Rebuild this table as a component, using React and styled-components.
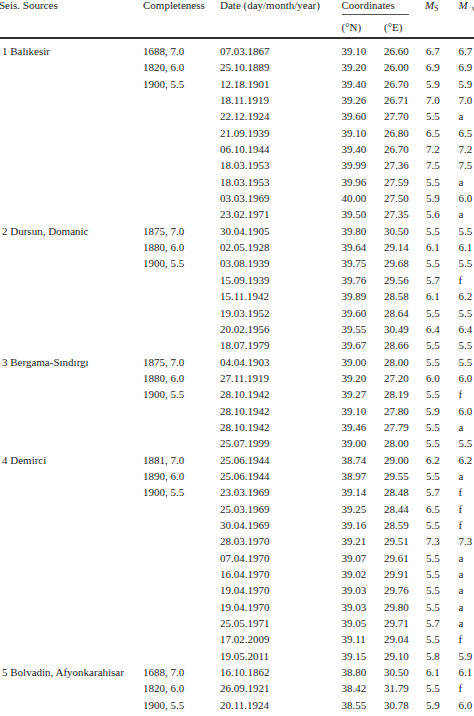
import React from "react";
import styled, { createGlobalStyle } from "styled-components";

const Global = createGlobalStyle`
  html, body { margin: 0; padding: 0; background: #fff; overflow: hidden; }
  body { font-family: "Liberation Serif", "Times New Roman", serif; color: #1e1e1e; }
`;

const COLS = "141px 77px 121.5px 42.5px 42px 32.5px 1fr";

const Table = styled.div`
  width: 474px;
  height: 716px;
  overflow: hidden;
  font-size: 11px;
`;

const HeadTop = styled.div`
  display: grid;
  grid-template-columns: ${COLS};
  padding-left: 2px;
  height: 16px;
  line-height: 10px;
  white-space: nowrap;
`;

const HeadSub = styled.div`
  display: grid;
  grid-template-columns: ${COLS};
  padding-left: 2px;
  height: 23px;
  box-sizing: border-box;
  padding-top: 5px;
  line-height: 12px;
  white-space: nowrap;
  border-bottom: 2px solid #2e2e2e;
`;

const HeadCell = styled.div`
  margin-left: ${(p) => p.$shift || 0}px;
`;

const CoordHead = styled.div`
  grid-column: 4 / span 2;
  width: 67px;
  height: 15px;
  box-sizing: border-box;
  border-bottom: 1px solid #555;
`;

const Mag = styled.span`
  font-style: italic;
`;

const Sub = styled.sub`
  font-size: 7.5px;
  font-style: normal;
  vertical-align: -2px;
  line-height: 0;
  margin-left: ${(p) => p.$gap || 0}px;
`;

const Body = styled.div`
  padding-top: 4px;
`;

const Row = styled.div`
  display: grid;
  grid-template-columns: ${COLS};
  padding-left: 2px;
  height: 16.35px;
  line-height: 16.35px;
  white-space: nowrap;
`;

const Cell = styled.div``;

const groups = [
  {
    name: "1 Balıkesir",
    comp: ["1688, 7.0", "1820, 6.0", "1900, 5.5"],
    rows: [
      ["07.03.1867", "39.10", "26.60", "6.7", "6.7"],
      ["25.10.1889", "39.20", "26.00", "6.9", "6.9"],
      ["12.18.1901", "39.40", "26.70", "5.9", "5.9"],
      ["18.11.1919", "39.26", "26.71", "7.0", "7.0"],
      ["22.12.1924", "39.60", "27.70", "5.5", "a"],
      ["21.09.1939", "39.10", "26.80", "6.5", "6.5"],
      ["06.10.1944", "39.40", "26.70", "7.2", "7.2"],
      ["18.03.1953", "39.99", "27.36", "7.5", "7.5"],
      ["18.03.1953", "39.96", "27.59", "5.5", "a"],
      ["03.03.1969", "40.00", "27.50", "5.9", "6.0"],
      ["23.02.1971", "39.50", "27.35", "5.6", "a"],
    ],
  },
  {
    name: "2 Dursun, Domanic",
    comp: ["1875, 7.0", "1880, 6.0", "1900, 5.5"],
    rows: [
      ["30.04.1905", "39.80", "30.50", "5.5", "5.5"],
      ["02.05.1928", "39.64", "29.14", "6.1", "6.1"],
      ["03.08.1939", "39.75", "29.68", "5.5", "5.5"],
      ["15.09.1939", "39.76", "29.56", "5.7", "f"],
      ["15.11.1942", "39.89", "28.58", "6.1", "6.2"],
      ["19.03.1952", "39.60", "28.64", "5.5", "5.5"],
      ["20.02.1956", "39.55", "30.49", "6.4", "6.4"],
      ["18.07.1979", "39.67", "28.66", "5.5", "5.5"],
    ],
  },
  {
    name: "3 Bergama-Sındırgı",
    comp: ["1875, 7.0", "1880, 6.0", "1900, 5.5"],
    rows: [
      ["04.04.1903", "39.00", "28.00", "5.5", "5.5"],
      ["27.11.1919", "39.20", "27.20", "6.0", "6.0"],
      ["28.10.1942", "39.27", "28.19", "5.5", "f"],
      ["28.10.1942", "39.10", "27.80", "5.9", "6.0"],
      ["28.10.1942", "39.46", "27.79", "5.5", "a"],
      ["25.07.1999", "39.00", "28.00", "5.5", "5.5"],
    ],
  },
  {
    name: "4 Demirci",
    comp: ["1881, 7.0", "1890, 6.0", "1900, 5.5"],
    rows: [
      ["25.06.1944", "38.74", "29.00", "6.2", "6.2"],
      ["25.06.1944", "38.97", "29.55", "5.5", "a"],
      ["23.03.1969", "39.14", "28.48", "5.7", "f"],
      ["25.03.1969", "39.25", "28.44", "6.5", "f"],
      ["30.04.1969", "39.16", "28.59", "5.5", "f"],
      ["28.03.1970", "39.21", "29.51", "7.3", "7.3"],
      ["07.04.1970", "39.07", "29.61", "5.5", "a"],
      ["16.04.1970", "39.02", "29.91", "5.5", "a"],
      ["19.04.1970", "39.03", "29.76", "5.5", "a"],
      ["19.04.1970", "39.03", "29.80", "5.5", "a"],
      ["25.05.1971", "39.05", "29.71", "5.7", "a"],
      ["17.02.2009", "39.11", "29.04", "5.5", "f"],
      ["19.05.2011", "39.15", "29.10", "5.8", "5.9"],
    ],
  },
  {
    name: "5 Bolvadin, Afyonkarahisar",
    comp: ["1688, 7.0", "1820, 6.0", "1900, 5.5"],
    rows: [
      ["16.10.1862", "38.80", "30.50", "6.1", "6.1"],
      ["26.09.1921", "38.42", "31.79", "5.5", "f"],
      ["20.11.1924", "38.55", "30.78", "5.9", "6.0"],
    ],
  },
];

export default function App() {
  return (
    <>
      <Global />
      <Table>
        <HeadTop>
          <HeadCell $shift={-3}>Seis. Sources</HeadCell>
          <HeadCell>Completeness</HeadCell>
          <HeadCell>Date (day/month/year)</HeadCell>
          <CoordHead>Coordinates</CoordHead>
          <HeadCell $shift={-1}>
            <Mag>M</Mag>
            <Sub>S</Sub>
          </HeadCell>
          <HeadCell>
            <Mag>M</Mag>
            <Sub $gap={4}>w</Sub>
          </HeadCell>
        </HeadTop>
        <HeadSub>
          <HeadCell />
          <HeadCell />
          <HeadCell />
          <HeadCell>(°N)</HeadCell>
          <HeadCell>(°E)</HeadCell>
          <HeadCell />
          <HeadCell />
        </HeadSub>
        <Body>
          {groups.map((g) =>
            g.rows.map((r, i) => (
              <Row key={g.name + i}>
                <Cell>{i === 0 ? g.name : ""}</Cell>
                <Cell>{g.comp[i] || ""}</Cell>
                {r.map((v, j) => (
                  <Cell key={j}>{v}</Cell>
                ))}
              </Row>
            ))
          )}
        </Body>
      </Table>
    </>
  );
}
